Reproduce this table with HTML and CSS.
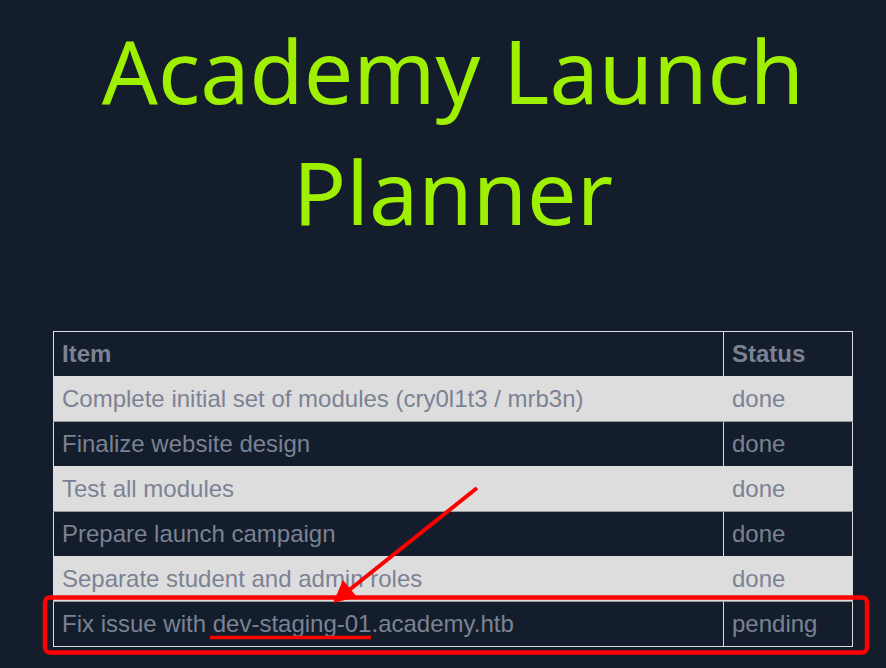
FILE: index.html
```html
<!DOCTYPE html>
<html lang="en">
<head>
<meta charset="utf-8">
<title>Academy Launch Planner</title>
<link rel="stylesheet" href="styles.css">
</head>
<body>
<main class="page">
  <h1 class="title">Academy Launch Planner</h1>
  <div class="table-wrap">
    <table class="plan">
      <thead>
        <tr><th class="col-item">Item</th><th class="col-status">Status</th></tr>
      </thead>
      <tbody>
        <tr class="light"><td>Complete initial set of modules (cry0l1t3 / mrb3n)</td><td>done</td></tr>
        <tr class="dark"><td>Finalize website design</td><td>done</td></tr>
        <tr class="light"><td>Test all modules</td><td>done</td></tr>
        <tr class="dark"><td>Prepare launch campaign</td><td>done</td></tr>
        <tr class="light"><td>Separate student and admin roles</td><td>done</td></tr>
        <tr class="dark"><td>Fix issue with dev-staging-01.academy.htb</td><td>pending</td></tr>
      </tbody>
    </table>
    <svg class="marks" width="886" height="668" viewBox="0 0 886 668" aria-hidden="true">
      <rect x="45" y="597.5" width="822" height="55" rx="5" ry="5" fill="none" stroke="#ff0000" stroke-width="4.5"/>
      <line x1="210" y1="637.5" x2="371" y2="637.5" stroke="#ff0000" stroke-width="3.5"/>
      <line x1="477" y1="488" x2="348" y2="591" stroke="#ff0000" stroke-width="4"/>
      <polygon points="333,603 343,580 357,597" fill="#ff0000"/>
    </svg>
  </div>
</main>
</body>
</html>
```
FILE: styles.css
```css
html, body {
  margin: 0;
  padding: 0;
  background: #141d2b;
}
body {
  width: 886px;
  height: 668px;
  overflow: hidden;
  font-family: "Liberation Sans", Arial, sans-serif;
}
.page {
  width: 800px;
  margin-left: 53px;
  padding-top: 10px;
  position: relative;
}
.title {
  margin: 0;
  font-family: "Noto Sans", "Open Sans", sans-serif;
  font-weight: 400;
  font-size: 88px;
  line-height: 121px;
  color: #9fef00;
  text-align: center;
}
.table-wrap {
  margin-top: 79px;
}
.plan {
  width: 800px;
  border-collapse: collapse;
  border: 1px solid #dddddd;
  font-size: 24px;
  color: #7b8294;
}
.plan th, .plan td {
  border: 1px solid #dddddd;
  padding: 9px 8px 9px 8px;
  height: 26px;
  text-align: left;
  line-height: 26px;
}
.plan th {
  font-weight: 700;
  background: #141d2b;
}
.col-status {
  width: 112px;
}
.plan tr.light td {
  background: #dddddd;
  border-bottom-color: #9a9a9a;
}
.plan tr.dark td {
  background: #141d2b;
}
.marks {
  position: absolute;
  left: -53px;
  top: 0;
  pointer-events: none;
}
```
